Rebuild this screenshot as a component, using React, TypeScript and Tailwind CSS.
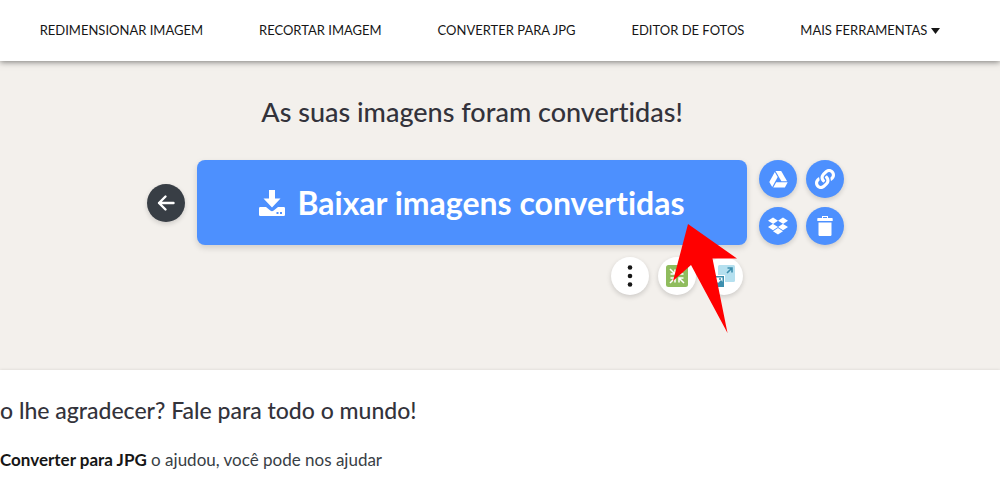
import type { ReactNode } from "react";
import { FaDropbox, FaLink } from "react-icons/fa";

const navItems = [
  "REDIMENSIONAR IMAGEM",
  "RECORTAR IMAGEM",
  "CONVERTER PARA JPG",
  "EDITOR DE FOTOS",
];

type RoundButtonProps = {
  label: string;
  color: string;
  children: ReactNode;
};

const RoundButton = ({ label, color, children }: RoundButtonProps) => {
  return (
    <button
      type="button"
      aria-label={label}
      className={`flex size-[38px] shrink-0 items-center justify-center rounded-full shadow-[0_2px_5px_rgba(0,0,0,0.16)] ${color}`}
    >
      {children}
    </button>
  );
};

const BackIcon = () => (
  <svg width="18" height="18" viewBox="0 0 18 18" fill="none" stroke="white" strokeWidth="2.4" strokeLinecap="round" strokeLinejoin="round">
    <path d="M16.500 9H2M8.500 2.500 2 9l6.500 6.500" />
  </svg>
);

const DownloadIcon = () => (
  <svg width="26" height="26" viewBox="0 0 26 26" fill="white" className="shrink-0">
    <path d="M10 0h6v8.500h5.500L13 17.500 4.500 8.500H10z" />
    <path
      fillRule="evenodd"
      d="M1.200 17H7l4.300 3.600q1.700 1.200 3.400 0L19 17h5.800q1.200 0 1.200 1.200v6.600q0 1.200-1.200 1.200H1.200Q0 26 0 24.800v-6.600Q0 17 1.200 17zM17.500 22v2h2v-2zm3.500 0v2h2v-2z"
    />
  </svg>
);

const DriveIcon = () => (
  <svg width="19" height="17" viewBox="0 0 19 17" fill="white">
    <path d="M6.500 0h5.700l5.900 10.300h-5.700z" />
    <path d="M5.800 1 8.700 6 3.200 16 .3 11z" />
    <path d="M7.200 11.200h11.500L15.900 16.500H4.200z" />
  </svg>
);

const TrashIcon = () => (
  <svg width="16" height="20" viewBox="0 0 16 20" fill="white">
    <path fillRule="evenodd" d="M5 0h6v2h4q.7 0 .7.700V5H.3V2.700Q.3 2 1 2h4zM6 1v1h4V1z" />
    <path d="M1.500 6.500h13v12.300q0 1.200-1.200 1.200H2.700q-1.200 0-1.200-1.200z" />
  </svg>
);

const DotsIcon = () => (
  <svg width="6" height="22" viewBox="0 0 6 22" fill="#161616">
    <circle cx="3" cy="2.500" r="2.300" />
    <circle cx="3" cy="11" r="2.300" />
    <circle cx="3" cy="19.500" r="2.300" />
  </svg>
);

const CompressIcon = () => (
  <svg width="22" height="22" viewBox="0 0 22 22" fill="none">
    <rect width="22" height="22" rx="2.500" fill="#8fbc5d" />
    <path
      stroke="white"
      strokeWidth="1.500"
      d="M4 4l4.500 4.500M4.500 9H9V4.500M18 4l-4.500 4.500M17.500 9H13V4.500M4 18l4.500-4.500M4.500 13H9v4.500M18 18l-4.500-4.500M17.500 13H13v4.500"
    />
  </svg>
);

const ResizeIcon = () => (
  <svg width="22" height="22" viewBox="0 0 22 22" fill="none">
    <rect x="5" width="17" height="17" rx="1.500" fill="#b5e0ef" />
    <path stroke="#3d8fae" strokeWidth="1.600" d="M14 8l5-5M14.500 3H19v4.500" />
    <rect y="10" width="12" height="12" fill="white" />
    <path fill="#3d8fae" fillRule="evenodd" d="M0 11h11v11H0zM1.500 12.500v8h8v-8z" />
    <path fill="#3d8fae" d="M1 21v-3l2-2 2 2 3-3 2 2v4z" />
    <circle cx="7" cy="14" r="1" fill="#3d8fae" />
  </svg>
);

const Pointer = () => (
  <svg
    width="64"
    height="109"
    viewBox="0 0 64 109"
    fill="#ff0000"
    className="pointer-events-none absolute -top-[33px] right-[10px]"
  >
    <path d="M15 0 64 34.500H39.500L54.500 109 18 41 0 57z" />
  </svg>
);

const Header = () => {
  return (
    <header className="relative z-10 bg-white shadow-[0_1px_6px_rgba(0,0,0,0.5)]">
      <nav className="flex h-[61px] items-center justify-center gap-14 pr-5 text-[13px] whitespace-nowrap text-[#161616]">
        {navItems.map((item) => (
          <a key={item} href="#">
            {item}
          </a>
        ))}
        <button type="button" className="flex items-center gap-1">
          MAIS FERRAMENTAS
          <svg width="9" height="6" viewBox="0 0 9 6" fill="#161616">
            <path d="M0 0h9L4.500 6z" />
          </svg>
        </button>
      </nav>
    </header>
  );
};

const Result = () => {
  return (
    <main className="bg-[#f3f0ec] pt-[31px] pr-14 pb-[75px]">
      <h1 className="text-center text-[27px] leading-10 font-medium text-[#33333b]">
        As suas imagens foram convertidas!
      </h1>
      <div className="mt-7 grid grid-cols-[1fr_minmax(0,550px)_1fr] items-center gap-x-3">
        <div className="flex justify-end">
          <RoundButton label="Voltar" color="bg-[#383e45]">
            <BackIcon />
          </RoundButton>
        </div>
        <button
          type="button"
          className="flex h-[85px] items-center justify-center gap-3 rounded-lg bg-[#4d90fe] text-[32px] font-bold whitespace-nowrap text-white shadow-[0_3px_6px_rgba(0,0,0,0.14)]"
        >
          <DownloadIcon />
          Baixar imagens convertidas
        </button>
        <div className="grid grid-cols-[38px_38px] gap-[9px] text-xl text-white">
          <RoundButton label="Google Drive" color="bg-[#4d90fe]">
            <DriveIcon />
          </RoundButton>
          <RoundButton label="Link" color="bg-[#4d90fe]">
            <FaLink />
          </RoundButton>
          <RoundButton label="Dropbox" color="bg-[#4d90fe]">
            <FaDropbox />
          </RoundButton>
          <RoundButton label="Eliminar" color="bg-[#4d90fe]">
            <TrashIcon />
          </RoundButton>
        </div>
        <div className="relative col-start-2 mt-3 flex justify-end gap-[9px] pr-1">
          <RoundButton label="Mais" color="bg-white">
            <DotsIcon />
          </RoundButton>
          <RoundButton label="Comprimir" color="bg-white">
            <CompressIcon />
          </RoundButton>
          <RoundButton label="Redimensionar" color="bg-white">
            <ResizeIcon />
          </RoundButton>
          <Pointer />
        </div>
      </div>
    </main>
  );
};

const Share = () => {
  return (
    <section className="bg-white pt-6 pb-6 shadow-[0_0_3px_rgba(0,0,0,0.12)]">
      <h2 className="text-[23px] leading-8 font-medium text-[#33333b]">
        o lhe agradecer? Fale para todo o mundo!
      </h2>
      <p className="mt-5 text-[17px] leading-7 text-[#383e45]">
        <strong className="font-bold text-[#161616]">Converter para JPG</strong> o ajudou, você pode nos ajudar
      </p>
    </section>
  );
};

export default function App() {
  return (
    <div className="min-h-screen overflow-x-hidden bg-white font-['Lato',sans-serif] [font-variant-ligatures:none]">
      <Header />
      <Result />
      <Share />
    </div>
  );
}
